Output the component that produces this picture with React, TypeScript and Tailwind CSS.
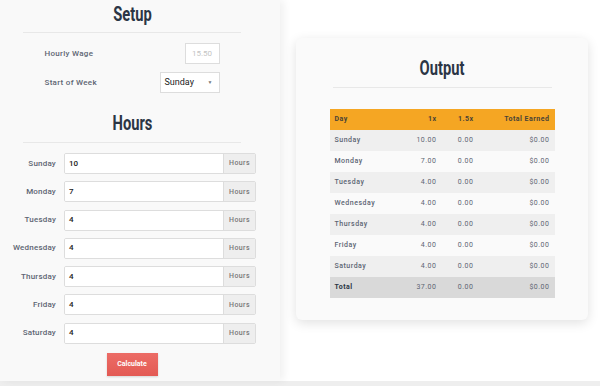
const days = [
  { day: "Sunday", hours: "10", x1: "10.00" },
  { day: "Monday", hours: "7", x1: "7.00" },
  { day: "Tuesday", hours: "4", x1: "4.00" },
  { day: "Wednesday", hours: "4", x1: "4.00" },
  { day: "Thursday", hours: "4", x1: "4.00" },
  { day: "Friday", hours: "4", x1: "4.00" },
  { day: "Saturday", hours: "4", x1: "4.00" },
];

const heading =
  "inline-block font-['Roboto',sans-serif] font-bold text-[21px] leading-[26px] text-[#2b3545] scale-x-[0.7]";

export default function App() {
  return (
    <div className="w-[600px] h-[386px] bg-white flex flex-col overflow-hidden font-['Roboto',sans-serif]">
      <div className="flex flex-row h-[381px]">
        {/* setup panel */}
        <div className="w-[280px] shrink-0 bg-[#f9f9f9] shadow-[4px_0_8px_rgba(0,0,0,0.06)] flex flex-col items-center pr-[16px] z-10">
          <h1 className={`${heading} mt-[1px]`}>Setup</h1>
          <div className="w-[218px] h-px bg-[#e8e8e8] mt-[5px]" />

          <div className="w-[175px] mt-[10px] flex flex-col gap-[8px] text-[8px] font-medium tracking-[0.3px] text-[#5d6573]">
            <div className="flex items-center justify-between h-[21px]">
              <span>Hourly Wage</span>
              <div className="w-[35px] h-[21px] border border-[#ddd] bg-white flex items-center justify-center text-[#c4c4c4] font-normal tracking-normal text-[8px]">
                15.50
              </div>
            </div>
            <div className="flex items-center justify-between h-[21px]">
              <span>Start of Week</span>
              <div className="w-[60px] h-[21px] border border-[#ddd] bg-white flex items-center justify-between pl-[4px] pr-[6px] text-[#222] font-normal tracking-normal">
                <span className="text-[9px]">Sunday</span>
                <span className="text-[5px] text-[#777]">▼</span>
              </div>
            </div>
          </div>

          <h2 className={`${heading} mt-[17px]`}>Hours</h2>
          <div className="w-[218px] h-px bg-[#e8e8e8] mt-[6px]" />

          <div className="flex flex-col gap-[7.3px] mt-[10px] w-full">
            {days.map((d) => (
              <div key={d.day} className="flex items-center h-[21px]">
                <span className="w-[56px] text-right text-[8px] font-medium tracking-[0.2px] text-[#5d6573]">
                  {d.day}
                </span>
                <div className="ml-[8px] w-[192px] h-[21px] flex border border-[#ddd] rounded-[2px] overflow-hidden">
                  <div className="flex-1 bg-white flex items-center pl-[4px] text-[8px] font-medium text-[#222]">
                    {d.hours}
                  </div>
                  <div className="w-[32px] bg-[#eee] border-l border-[#ddd] flex items-center justify-center text-[7px] font-medium tracking-[0.4px] text-[#777]">
                    Hours
                  </div>
                </div>
              </div>
            ))}
          </div>

          <button className="mt-[9px] w-[51px] h-[23px] bg-gradient-to-b from-[#ec6c66] to-[#e35a54] text-white text-[7px] font-bold shadow-[0_1px_2px_rgba(0,0,0,0.15)]">
            Calculate
          </button>
        </div>

        {/* output */}
        <div className="flex-1 pl-[16px] pr-[12px] pt-[38px]">
          <div className="h-[282px] bg-[#fafafa] rounded-[6px] shadow-[0_3px_12px_rgba(0,0,0,0.12)] flex flex-col items-center">
            <h2 className={`${heading} mt-[17px]`}>Output</h2>
            <div className="w-[219px] h-px bg-[#e8e8e8] mt-[6px]" />
            <table className="mt-[21px] w-[225px] table-fixed text-[7px] tracking-[0.5px] text-[#5d6573] border-collapse">
              <thead>
                <tr className="bg-[#f5a623] h-[21px] text-[#4a4336]">
                  <th className="w-[60px] text-left pl-[5px] font-bold">Day</th>
                  <th className="w-[47px] text-right font-bold">1x</th>
                  <th className="w-[37px] text-right font-bold">1.5x</th>
                  <th className="w-[81px] text-right pr-[5px] font-bold">Total Earned</th>
                </tr>
              </thead>
              <tbody>
                {days.map((d, i) => (
                  <tr key={d.day} className={`h-[21px] ${i % 2 === 0 ? "bg-[#efefef]" : "bg-[#fafafa]"}`}>
                    <td className="pl-[5px] font-medium">{d.day}</td>
                    <td className="text-right">{d.x1}</td>
                    <td className="text-right">0.00</td>
                    <td className="text-right pr-[5px]">$0.00</td>
                  </tr>
                ))}
                <tr className="h-[21px] bg-[#d9d9d9] text-[#5d6573]">
                  <td className="pl-[5px] font-bold text-[#2b3545]">Total</td>
                  <td className="text-right">37.00</td>
                  <td className="text-right">0.00</td>
                  <td className="text-right pr-[5px]">$0.00</td>
                </tr>
              </tbody>
            </table>
          </div>
        </div>
      </div>
      <div className="h-[5px] bg-[#eeeeee]" />
    </div>
  );
}
